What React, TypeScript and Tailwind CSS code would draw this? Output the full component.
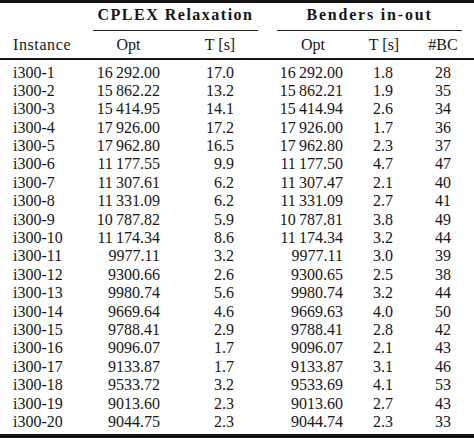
import React from "react";

const rows: [string, string, string, string, string, string][] = [
  ["i300-1", "16\u2009292.00", "17.0", "16\u2009292.00", "1.8", "28"],
  ["i300-2", "15\u2009862.22", "13.2", "15\u2009862.21", "1.9", "35"],
  ["i300-3", "15\u2009414.95", "14.1", "15\u2009414.94", "2.6", "34"],
  ["i300-4", "17\u2009926.00", "17.2", "17\u2009926.00", "1.7", "36"],
  ["i300-5", "17\u2009962.80", "16.5", "17\u2009962.80", "2.3", "37"],
  ["i300-6", "11\u2009177.55", "9.9", "11\u2009177.50", "4.7", "47"],
  ["i300-7", "11\u2009307.61", "6.2", "11\u2009307.47", "2.1", "40"],
  ["i300-8", "11\u2009331.09", "6.2", "11\u2009331.09", "2.7", "41"],
  ["i300-9", "10\u2009787.82", "5.9", "10\u2009787.81", "3.8", "49"],
  ["i300-10", "11\u2009174.34", "8.6", "11\u2009174.34", "3.2", "44"],
  ["i300-11", "9977.11", "3.2", "9977.11", "3.0", "39"],
  ["i300-12", "9300.66", "2.6", "9300.65", "2.5", "38"],
  ["i300-13", "9980.74", "5.6", "9980.74", "3.2", "44"],
  ["i300-14", "9669.64", "4.6", "9669.63", "4.0", "50"],
  ["i300-15", "9788.41", "2.9", "9788.41", "2.8", "42"],
  ["i300-16", "9096.07", "1.7", "9096.07", "2.1", "43"],
  ["i300-17", "9133.87", "1.7", "9133.87", "3.1", "46"],
  ["i300-18", "9533.72", "3.2", "9533.69", "4.1", "53"],
  ["i300-19", "9013.60", "2.3", "9013.60", "2.7", "43"],
  ["i300-20", "9044.75", "2.3", "9044.74", "2.3", "33"],
];

export default function App() {
  return (
    <div
      className="w-[474px] h-[438px] bg-white text-[#161616] text-[16px] overflow-hidden"
      style={{ fontFamily: '"Liberation Serif", "Times New Roman", serif' }}
    >
      <div className="h-[3px] bg-[#111]" />
      {/* header 1 */}
      <div className="flex h-[28px] font-bold leading-[24px]">
        <div className="ml-[93px] w-[165px] text-center tracking-[1.5px] border-b border-[#222]">
          CPLEX Relaxation
        </div>
        <div className="ml-[19px] w-[185px] text-center tracking-[1.8px] border-b border-[#222]">
          Benders in-out
        </div>
      </div>
      {/* header 2 */}
      <div className="flex h-[27px] leading-[27px]">
        <div className="w-[93px] pl-[13px] tracking-[0.6px]">Instance</div>
        <div className="w-[71px] text-center">Opt</div>
        <div className="ml-[36px] w-[40px] text-center">T [s]</div>
        <div className="ml-[37px] w-[72px] text-center">Opt</div>
        <div className="ml-[15px] w-[40px] text-center">T [s]</div>
        <div className="ml-[19px] w-[40px] text-center">#BC</div>
      </div>
      <div className="h-[1.5px] bg-[#111]" />
      <div className="pt-[4px] pb-[2.5px]">
        {rows.map((r) => (
          <div key={r[0]} className="flex h-[18.4px] leading-[18.4px]">
            <div className="w-[93px] pl-[13px]">{r[0]}</div>
            <div className="w-[71px] text-right pr-[4px]">{r[1]}</div>
            <div className="ml-[36px] w-[40px] text-right pr-[6px]">{r[2]}</div>
            <div className="ml-[37px] w-[72px] text-right pr-[6px]">{r[3]}</div>
            <div className="ml-[15px] w-[40px] text-right pr-[11px]">{r[4]}</div>
            <div className="ml-[19px] w-[40px] text-center">{r[5]}</div>
          </div>
        ))}
      </div>
      <div className="h-[4px] bg-[#111]" />
    </div>
  );
}
